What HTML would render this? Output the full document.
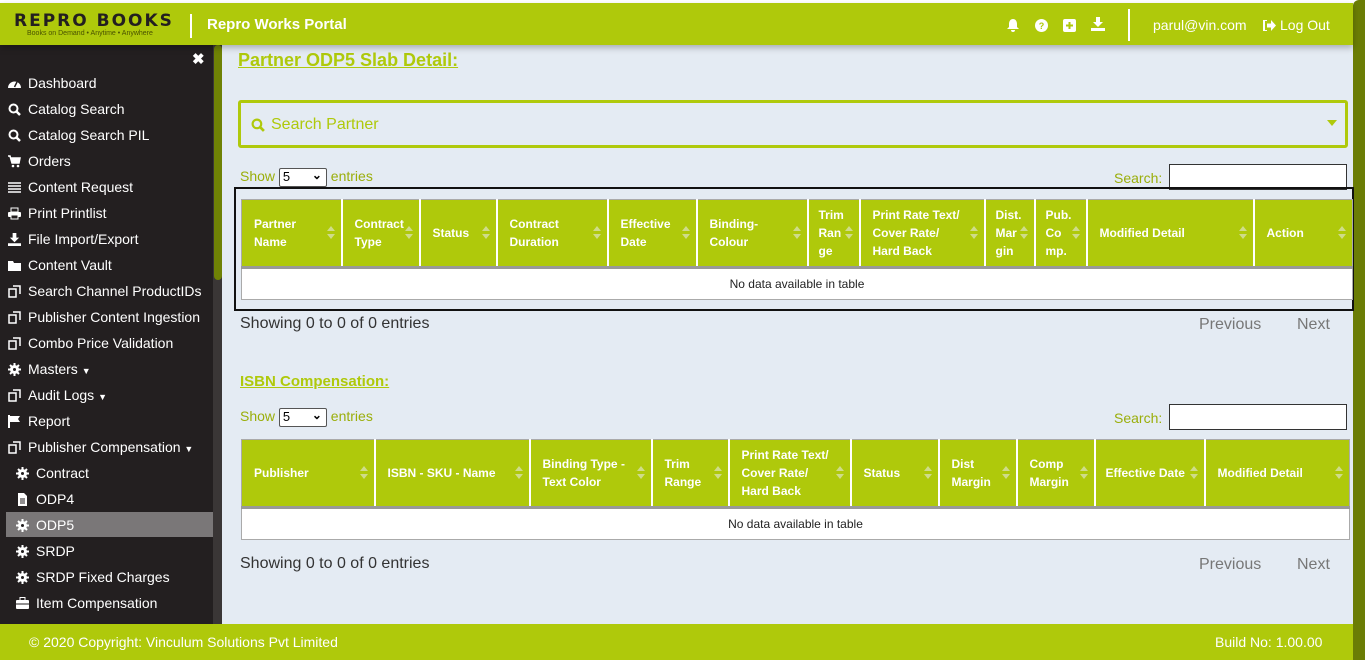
<!DOCTYPE html>
<html><head><meta charset="utf-8"><style>
*{box-sizing:border-box;margin:0;padding:0}
body{width:1365px;height:660px;overflow:hidden;font-family:"Liberation Sans",Arial,sans-serif;background:#e4ebf3;position:relative}
.hdr{position:absolute;left:0;top:3px;width:1353px;height:42px;background:#afc90b;box-shadow:0 3px 6px rgba(0,0,0,.25);z-index:5}
.top{position:absolute;left:0;top:0;width:1365px;height:3px;background:#fff}
.logo{position:absolute;left:14px;top:8px;font-weight:bold;font-size:17px;letter-spacing:2px;color:#231f20;font-family:"DejaVu Sans",sans-serif}
.tag{position:absolute;left:27px;top:27px;font-size:7px;color:#4a5200}
.sep{position:absolute;left:190px;top:11px;width:2px;height:24px;background:#fff}
.sep2{position:absolute;left:1128px;top:6px;width:2px;height:32px;background:#fff}
.title{position:absolute;left:207px;top:13px;color:#fff;font-weight:bold;font-size:15px}
.hr{position:absolute;top:14px;color:#fff;font-size:14px}
.hi{position:absolute;top:16px}
.sb{position:absolute;left:0;top:45px;width:213px;height:579px;background:#231f20}
.sbs{position:absolute;left:213px;top:45px;width:9px;height:579px;background:#3a3636}
.sbt{position:absolute;left:214px;top:45px;width:8px;height:235px;background:#6f8205;border-radius:4px}
.vs{position:absolute;left:1353px;top:0;width:12px;height:660px;background:#6b7d05;border-radius:6px 0 0 0}
.it{position:absolute;left:8px;color:#fff;font-size:14px;height:26px;line-height:26px;white-space:nowrap}
.it svg{width:13px;height:13px;margin-right:7px;vertical-align:-2px}
.sub{left:16px}
.act{position:absolute;left:6px;top:512px;width:207px;height:25px;background:#7a7778}
.ft{position:absolute;left:0;top:624px;width:1353px;height:36px;background:#afc90b;color:#fff;font-size:14px}
h2{position:absolute;color:#afc90b;text-decoration:underline;font-weight:bold}
.srch{position:absolute;left:238px;top:100px;width:1110px;height:48px;border:3px solid #afc90b;border-radius:3px;color:#afc90b;font-size:16px;padding:13px 0 0 30px}
.g{color:#9aae0a;font-size:14px;position:absolute}
.sel{display:inline-block;width:48px;height:19px;border:1px solid #555;background:#fff;color:#000;font-size:13px;padding-left:3px;vertical-align:middle;border-radius:2px;position:relative}
.inp{position:absolute;width:178px;height:26px;border:1px solid #333;background:#fff}
table{position:absolute;border-collapse:collapse;table-layout:fixed;background:#fff;border:1px solid #aaa}
th{background:#afc90b;color:#fff;font-size:12px;text-align:left;padding:0 18px 0 12px;border-left:2px solid #fff;border-bottom:3px solid #999;line-height:18px;position:relative;vertical-align:middle}
th:first-child{border-left:0}
th::after{content:"";position:absolute;right:6px;top:50%;margin-top:-7px;width:0;height:0;border:4px solid transparent;border-bottom:5px solid #cfdc8a;border-top:0}
th::before{content:"";position:absolute;right:6px;top:50%;margin-top:1px;border:4px solid transparent;border-top:5px solid #cfdc8a;border-bottom:0}
td{font-size:12px;text-align:center;height:32px;color:#222}
.sh{position:absolute;font-size:16px;color:#333}
.pn{position:absolute;font-size:16px;color:#777}
</style></head><body>
<div class="top"></div>
<div class="hdr">
<div class="logo">REPRO BOOKS</div><div class="tag">Books on Demand • Anytime • Anywhere</div>
<div class="sep"></div><div class="title">Repro Works Portal</div>
<svg class="hi" style="left:1007px" width="12" height="13" viewBox="0 0 12 13"><path d="M6 0C3 0 2 3 2 5v3L0 10h12l-2-2V5c0-2-1-5-4-5zM4 11h4a2 2 0 0 1-4 0z" fill="#fff"/></svg>
<svg class="hi" style="left:1035px" width="13" height="13" viewBox="0 0 13 13"><circle cx="6.5" cy="6.5" r="6.5" fill="#fff"/><text x="6.5" y="10" font-size="9" font-weight="bold" text-anchor="middle" fill="#afc90b" font-family="Liberation Sans">?</text></svg>
<svg class="hi" style="left:1063px" width="13" height="13" viewBox="0 0 13 13"><rect width="13" height="13" rx="2" fill="#fff"/><path d="M6.5 3v7M3 6.5h7" stroke="#afc90b" stroke-width="2"/></svg>
<svg class="hi" style="left:1091px;top:14px" width="14" height="14" viewBox="0 0 14 14"><path d="M5 0h4v5h3L7 10 2 5h3z M0 11h14v3H0z" fill="#fff"/></svg>
<div class="sep2"></div>
<div class="hr" style="left:1153px">parul@vin.com</div>
<svg class="hi" style="left:1263px;top:17px" width="13" height="11" viewBox="0 0 13 11"><path d="M4 0H1v11h3" stroke="#fff" stroke-width="2" fill="none"/><path d="M4 3.5h4V0l5 5.5L8 11V7.5H4z" fill="#fff"/></svg>
<div class="hr" style="left:1280px">Log Out</div>
</div>
<div class="vs"></div>
<div class="sb"></div><div class="sbs"></div><div class="sbt"></div>
<div class="act"></div>
<div style="position:absolute;left:192px;top:50px;color:#fff;font-weight:bold;font-size:15px">✖</div>
<svg width="0" height="0" style="position:absolute"><defs>
<symbol id="cp" viewBox="0 0 13 13"><path d="M1 4h7v8H1z M5 1h7v8" stroke="#fff" stroke-width="1.5" fill="none"/></symbol>
<symbol id="gr" viewBox="0 0 13 13"><circle cx="6.5" cy="6.5" r="4.5" fill="#fff"/><path d="M6.5 0v13M0 6.5h13M2 2l9 9M11 2l-9 9" stroke="#fff" stroke-width="2"/><circle cx="6.5" cy="6.5" r="1.5" fill="#231f20"/></symbol>
<symbol id="mg" viewBox="0 0 13 13"><circle cx="5.5" cy="5.5" r="4" stroke="#fff" stroke-width="2" fill="none"/><path d="M8.5 8.5l3.5 3.5" stroke="#fff" stroke-width="2.5"/></symbol>
</defs></svg>
<div class="it" style="top:70px"><svg viewBox="0 0 13 13"><path d="M0 11A6.5 6.5 0 0 1 13 11z" fill="#fff"/><path d="M6.5 10L9 5" stroke="#231f20" stroke-width="1.5"/></svg>Dashboard</div>
<div class="it" style="top:96px"><svg><use href="#mg"/></svg>Catalog Search</div>
<div class="it" style="top:122px"><svg><use href="#mg"/></svg>Catalog Search PIL</div>
<div class="it" style="top:148px"><svg viewBox="0 0 13 13"><path d="M0 1h2l2 7h7l1-5H3" stroke="#fff" stroke-width="1.5" fill="#fff"/><circle cx="5" cy="11" r="1.3" fill="#fff"/><circle cx="10" cy="11" r="1.3" fill="#fff"/></svg>Orders</div>
<div class="it" style="top:174px"><svg viewBox="0 0 13 13"><path d="M0 2h13M0 5h13M0 8h13M0 11h13" stroke="#fff" stroke-width="1.6"/></svg>Content Request</div>
<div class="it" style="top:200px"><svg viewBox="0 0 13 13"><rect x="3" y="1" width="7" height="4" fill="none" stroke="#fff"/><rect x="0" y="5" width="13" height="5" rx="1" fill="#fff"/><rect x="3" y="8" width="7" height="4" fill="#231f20" stroke="#fff"/></svg>Print Printlist</div>
<div class="it" style="top:226px"><svg viewBox="0 0 14 14"><path d="M5 0h4v5h3L7 10 2 5h3z M0 11h14v3H0z" fill="#fff"/></svg>File Import/Export</div>
<div class="it" style="top:252px"><svg viewBox="0 0 13 13"><path d="M0 2h5l1 2h7v8H0z" fill="#fff"/></svg>Content Vault</div>
<div class="it" style="top:278px"><svg><use href="#cp"/></svg>Search Channel ProductIDs</div>
<div class="it" style="top:304px"><svg><use href="#cp"/></svg>Publisher Content Ingestion</div>
<div class="it" style="top:330px"><svg><use href="#cp"/></svg>Combo Price Validation</div>
<div class="it" style="top:356px"><svg><use href="#gr"/></svg>Masters <span style="font-size:9px">▼</span></div>
<div class="it" style="top:382px"><svg><use href="#cp"/></svg>Audit Logs <span style="font-size:9px">▼</span></div>
<div class="it" style="top:408px"><svg viewBox="0 0 13 13"><path d="M1 0v13" stroke="#fff" stroke-width="2"/><path d="M2 1h10l-2 3 2 3H2z" fill="#fff"/></svg>Report</div>
<div class="it" style="top:434px"><svg><use href="#cp"/></svg>Publisher Compensation <span style="font-size:9px">▼</span></div>
<div class="it sub" style="top:460px"><svg><use href="#gr"/></svg>Contract</div>
<div class="it sub" style="top:486px"><svg viewBox="0 0 13 13"><path d="M2 0h6l3 3v10H2z" fill="#fff"/><path d="M4 6h5M4 8h5M4 10h5" stroke="#231f20"/></svg>ODP4</div>
<div class="it sub" style="top:512px"><svg><use href="#gr"/></svg>ODP5</div>
<div class="it sub" style="top:538px"><svg><use href="#gr"/></svg>SRDP</div>
<div class="it sub" style="top:564px"><svg><use href="#gr"/></svg>SRDP Fixed Charges</div>
<div class="it sub" style="top:590px"><svg viewBox="0 0 13 13"><rect x="0" y="3" width="13" height="9" rx="1" fill="#fff"/><rect x="4" y="0.5" width="5" height="3" fill="none" stroke="#fff"/><path d="M0 7h13" stroke="#231f20"/></svg>Item Compensation</div>

<h2 style="left:238px;top:50px;font-size:18px">Partner ODP5 Slab Detail:</h2>
<div class="srch">Search Partner<svg style="position:absolute;left:10px;top:15px" width="14" height="14" viewBox="0 0 13 13"><circle cx="5.5" cy="5.5" r="4" stroke="#afc90b" stroke-width="2" fill="none"/><path d="M8.5 8.5l3.5 3.5" stroke="#afc90b" stroke-width="2.5"/></svg><span style="position:absolute;right:8px;top:17px;width:0;height:0;border:5px solid transparent;border-top:6px solid #afc90b"></span></div>
<div class="g" style="left:240px;top:168px">Show <span class="sel">5<span style="position:absolute;right:4px;top:-1px;font-size:12px;font-weight:bold">⌄</span></span> entries</div>
<div class="g" style="left:1114px;top:170px">Search:</div><div class="inp" style="left:1169px;top:164px"></div>
<div style="position:absolute;left:234px;top:187px;width:1120px;height:124px;border:2px solid #111"></div>
<table style="left:241px;top:199px;width:1111px">
<colgroup><col style="width:100px"><col style="width:78px"><col style="width:77px"><col style="width:111px"><col style="width:89px"><col style="width:111px"><col style="width:52px"><col style="width:125px"><col style="width:50px"><col style="width:52px"><col style="width:167px"><col style="width:99px"></colgroup>
<tr style="height:68px"><th>Partner Name</th><th>Contract Type</th><th>Status</th><th>Contract Duration</th><th>Effective Date</th><th>Binding-Colour</th><th style="padding:0 14px 0 10px">Trim Ran ge</th><th>Print Rate Text/ Cover Rate/ Hard Back</th><th style="padding:0 14px 0 10px">Dist. Mar gin</th><th style="padding:0 14px 0 10px">Pub. Co mp.</th><th>Modified Detail</th><th>Action</th></tr>
<tr><td colspan="12">No data available in table</td></tr></table>
<div class="sh" style="left:240px;top:315px">Showing 0 to 0 of 0 entries</div>
<div class="pn" style="left:1199px;top:316px">Previous</div><div class="pn" style="left:1297px;top:316px">Next</div>

<h2 style="left:240px;top:373px;font-size:15px">ISBN Compensation:</h2>
<div class="g" style="left:240px;top:408px">Show <span class="sel">5<span style="position:absolute;right:4px;top:-1px;font-size:12px;font-weight:bold">⌄</span></span> entries</div>
<div class="g" style="left:1114px;top:410px">Search:</div><div class="inp" style="left:1169px;top:404px"></div>
<table style="left:241px;top:439px;width:1108px">
<colgroup><col style="width:133px"><col style="width:155px"><col style="width:122px"><col style="width:77px"><col style="width:122px"><col style="width:88px"><col style="width:78px"><col style="width:78px"><col style="width:110px"><col style="width:145px"></colgroup>
<tr style="height:68px"><th>Publisher</th><th>ISBN - SKU - Name</th><th>Binding Type - Text Color</th><th>Trim Range</th><th>Print Rate Text/ Cover Rate/ Hard Back</th><th>Status</th><th>Dist Margin</th><th>Comp Margin</th><th style="padding:0 14px 0 10px">Effective Date</th><th>Modified Detail</th></tr>
<tr><td colspan="10">No data available in table</td></tr></table>
<div class="sh" style="left:240px;top:555px">Showing 0 to 0 of 0 entries</div>
<div class="pn" style="left:1199px;top:556px">Previous</div><div class="pn" style="left:1297px;top:556px">Next</div>

<div class="ft"><span style="position:absolute;left:29px;top:10px">© 2020 Copyright: Vinculum Solutions Pvt Limited</span><span style="position:absolute;left:1215px;top:10px">Build No: 1.00.00</span></div>
</body></html>
